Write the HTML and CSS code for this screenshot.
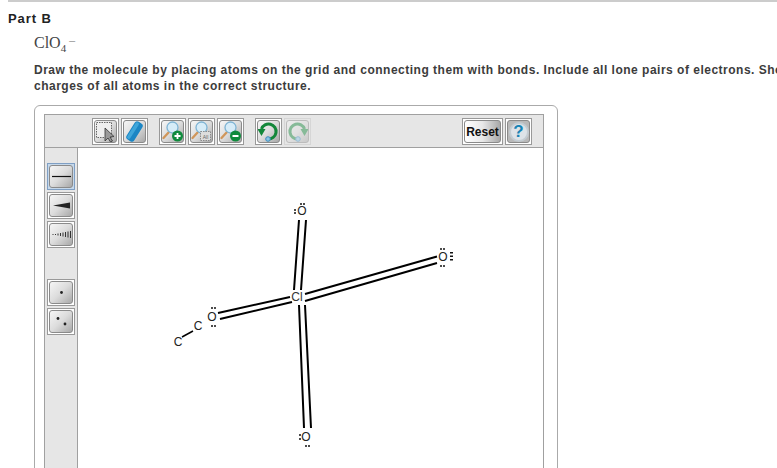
FILE: index.html
```html
<!DOCTYPE html>
<html lang="en">
<head>
  <meta charset="UTF-8">
  <title>Part B</title>
  <link rel="stylesheet" href="styles.css">
</head>
<body>

  <!-- Part heading -->
  <div class="part-head">
    <h2>Part B</h2>
  </div>

  <!-- Question -->
  <section class="question">
    <p class="formula">ClO<sub>4</sub><sup>&minus;</sup></p>
    <p class="prompt">Draw the molecule by placing atoms on the grid and connecting them with bonds. Include all lone pairs of electrons. Show the formal<br>charges of all atoms in the correct structure.</p>
  </section>

  <!-- Drawing widget -->
  <section class="widget">
    <div class="applet">

      <div class="toolbar">
        <div class="group">
          <button class="tool"><span class="face">
            <svg viewBox="0 0 21 21"><rect x="1.500" y="1.500" width="15" height="15" fill="#eee" stroke="#666" stroke-dasharray="1.500 1"/><path d="M10 7l9 8.500-4 .5 2.500 4-2 1-2.500-4-3 3z" fill="#999" stroke="#333" stroke-width=".8"/></svg>
          </span></button>
          <button class="tool"><span class="face">
            <svg viewBox="0 0 21 21"><rect x="6" y="0" width="9" height="21" rx="3" fill="#1c86c4" transform="rotate(32 10.500 10.500)"/><rect x="7" y="1" width="3.500" height="19" rx="1.700" fill="#3fa6da" transform="rotate(32 10.500 10.500)"/></svg>
          </span></button>
        </div>
        <div class="group">
          <button class="tool"><span class="face">
            <svg viewBox="0 0 21 21"><path d="M1.500 17l5.500-6" stroke="#d0965a" stroke-width="2.300" stroke-linecap="round"/><circle cx="10.500" cy="6.500" r="5.500" fill="#d6ecf8" stroke="#7fb4d4" stroke-width="1.300"/><circle cx="15.500" cy="15" r="5.500" fill="#0f8a3c"/><path d="M12.500 15h6M15.500 12v6" stroke="#fff" stroke-width="1.800"/></svg>
          </span></button>
          <button class="tool"><span class="face">
            <svg viewBox="0 0 21 21"><path d="M1.500 17l5.500-6" stroke="#d0965a" stroke-width="2.300" stroke-linecap="round"/><circle cx="10.500" cy="6.500" r="5.500" fill="#d6ecf8" stroke="#7fb4d4" stroke-width="1.300"/><rect x="9.500" y="10.500" width="10" height="9" fill="#ddd" stroke="#777" stroke-width=".8" stroke-dasharray="1.500 1"/><text class="all" x="14.500" y="17.500">All</text></svg>
          </span></button>
          <button class="tool"><span class="face">
            <svg viewBox="0 0 21 21"><path d="M1.500 17l5.500-6" stroke="#d0965a" stroke-width="2.300" stroke-linecap="round"/><circle cx="10.500" cy="6.500" r="5.500" fill="#d6ecf8" stroke="#7fb4d4" stroke-width="1.300"/><circle cx="15.500" cy="15" r="5.500" fill="#0f8a3c"/><path d="M12.500 15h6" stroke="#fff" stroke-width="2"/></svg>
          </span></button>
        </div>
        <div class="group">
          <button class="tool"><span class="face">
            <svg viewBox="0 0 21 21"><path d="M10 18A7.500 7.500 0 1 0 3.500 8" fill="none" stroke="#13873a" stroke-width="3"/><path d="M-.5 8h8l-4 7z" fill="#13873a"/><circle cx="10" cy="18" r="2.300" fill="#8cc4e4" stroke="#3d8dbd"/></svg>
          </span></button>
          <button class="tool off"><span class="face">
            <svg viewBox="0 0 21 21"><path d="M11 18A7.500 7.500 0 1 1 17.500 8" fill="none" stroke="#13873a" stroke-width="3"/><path d="M21.500 8h-8l4 7z" fill="#13873a"/><circle cx="11" cy="18" r="2.300" fill="#8cc4e4" stroke="#3d8dbd"/></svg>
          </span></button>
        </div>
        <div class="group group-right">
          <button class="tool reset"><span class="face">Reset</span></button>
          <button class="tool"><span class="face help"><span class="help-mark">?</span></span></button>
        </div>
      </div>

      <div class="work">
        <div class="sidebar">
          <div class="side-group">
            <button class="tool selected"><span class="face">
              <svg viewBox="0 0 21 21"><path d="M1 10.500h19" stroke="#111" stroke-width="1.200"/></svg>
            </span></button>
            <button class="tool"><span class="face">
              <svg viewBox="0 0 21 21"><path d="M2 10.500l17-3v6z" fill="#222"/></svg>
            </span></button>
            <button class="tool"><span class="face">
              <svg viewBox="0 0 21 21"><path d="M2 10v1M4.500 10v1M7 9.500v2M9.500 9v3M12 8.500v4M14.500 8v5M17 7.500v6M19.500 7v7" stroke="#333" stroke-width="1"/></svg>
            </span></button>
          </div>
          <div class="side-group">
            <button class="tool"><span class="face">
              <svg viewBox="0 0 21 21"><circle cx="10.500" cy="10.500" r="1.400" fill="#222"/></svg>
            </span></button>
            <button class="tool"><span class="face">
              <svg viewBox="0 0 21 21"><circle cx="7" cy="7.500" r="1.400" fill="#222"/><circle cx="14" cy="13" r="1.400" fill="#222"/></svg>
            </span></button>
          </div>
        </div>

        <!-- viewBox uses page coordinates so atoms read off the picture -->
        <div class="canvas">
          <svg class="molecule" viewBox="78 148 465 320">
            <g class="bond">
              <path d="M299 220L294 290M306 220L301 290"/>
              <path d="M299 305L304 428M305 305L311 428"/>
              <path d="M305 294L437 256.500M305 301L437 263"/>
              <path d="M218 313L290 297M220 319L292 302"/>
            </g>
            <path class="single" d="M182 337L193 331"/>

            <g class="atom">
              <text x="302" y="215">O</text>
              <text x="443" y="261">O</text>
              <text x="212" y="321">O</text>
              <text x="306" y="441">O</text>
              <text x="198" y="330">C</text>
              <text x="178" y="346">C</text>
              <text class="cl" x="297" y="301">Cl</text>
            </g>

            <g class="pairs">
              <circle cx="301" cy="204" r="1"/><circle cx="304" cy="204" r="1"/>
              <circle cx="295" cy="210" r="1"/><circle cx="295" cy="213" r="1"/>
              <circle cx="441" cy="249" r="1"/><circle cx="444" cy="249" r="1"/>
              <circle cx="441" cy="266" r="1"/><circle cx="444" cy="266" r="1"/>
              <rect x="450" y="252" width="3" height="1.500"/>
              <rect x="450" y="255.500" width="3" height="1.500"/>
              <rect x="450" y="259" width="3" height="1.500"/>
              <circle cx="212" cy="308" r="1"/><circle cx="215" cy="308" r="1"/>
              <circle cx="212" cy="326" r="1"/><circle cx="215" cy="326" r="1"/>
              <circle cx="300" cy="435" r="1"/><circle cx="300" cy="439" r="1"/>
              <circle cx="306" cy="446" r="1"/><circle cx="309" cy="446" r="1"/>
            </g>
          </svg>
        </div>
      </div>

    </div>
  </section>

</body>
</html>
```

FILE: styles.css
```css
/* General Reset */
* {
  margin: 0;
  padding: 0;
  box-sizing: border-box;
}

html, body {
  height: 468px;
  overflow: hidden;
}

body {
  font-family: "Liberation Sans", Arial, sans-serif;
  background-color: #ffffff;
  color: #333333;
}

/* Part heading */
.part-head {
  margin-left: 8px;
  border-top: 2px solid #cccccc;
  padding-top: 9px;
}

.part-head h2 {
  font-size: 13px;
  line-height: 15px;
  letter-spacing: 0.9px;
  color: #222222;
}

/* Question */
.question {
  padding-left: 34px;
}

.formula {
  font-family: "Liberation Serif", "Times New Roman", serif;
  font-size: 16px;
  line-height: 20px;
  margin-top: 7px;
  color: #444444;
}

.formula sub,
.formula sup {
  font-size: 11px;
  line-height: 0;
}

.formula sup {
  font-size: 13px;
  margin-left: 2px;
  vertical-align: 2px;
  color: #888888;
}

.prompt {
  margin-top: 9px;
  font-size: 12px;
  font-weight: bold;
  line-height: 16px;
  letter-spacing: 0.5px;
  white-space: nowrap;
  color: #3c3c3c;
}

/* Drawing widget */
.widget {
  margin: 11px 0 0 34px;
  width: 524px;
  height: 385px;
  border: 1px solid #aaaaaa;
  border-radius: 6px;
  padding: 8px 13px 0 9px;
}

.applet {
  height: 375px;
  border: 1px solid #a0a0a0;
  display: flex;
  flex-direction: column;
}

.toolbar {
  height: 33px;
  background-color: #e6e6e6;
  border-bottom: 1px solid #a0a0a0;
  display: flex;
  align-items: center;
  padding: 1px 11px 0 47px;
  gap: 11px;
}

.group {
  display: flex;
  gap: 2px;
}

.group-right {
  margin-left: auto;
}

/* Buttons */
.tool {
  display: block;
  width: 27px;
  height: 27px;
  padding: 1px;
  border: 1px solid #999999;
  background-color: #ffffff;
  font-family: inherit;
}

.face {
  display: flex;
  align-items: center;
  justify-content: center;
  width: 100%;
  height: 100%;
  border: 1px solid #8a8a8a;
  border-radius: 3px;
  background: linear-gradient(135deg, #f6f6f6 0%, #dcdcdc 50%, #a8a8a8 100%);
}

.face svg {
  width: 21px;
  height: 21px;
}

.tool.off {
  border-color: #c4c4c4;
  background-color: #e6e6e6;
  opacity: 0.45;
}

.tool.selected {
  border-color: #7f9fc4;
  background-color: #c6d8ea;
}

.reset {
  width: 41px;
}

.reset .face {
  font-size: 12px;
  font-weight: bold;
  color: #111111;
  background: linear-gradient(90deg, #ffffff 0%, #e8e8e8 50%, #a8a8a8 100%);
}

.help {
  background: #b9b9b9;
}

.help-mark {
  display: block;
  width: 20px;
  height: 20px;
  border-radius: 50%;
  background-color: #dde3e8;
  border: 2px solid #c4ccd2;
  font-size: 17px;
  font-weight: bold;
  line-height: 16px;
  text-align: center;
  color: #1883b5;
}

.all {
  font-size: 5px;
  text-anchor: middle;
  fill: #666666;
}

/* Work area */
.work {
  flex: 1;
  display: flex;
  min-height: 0;
}

.sidebar {
  width: 33px;
  background-color: #e6e6e6;
  border-right: 1px solid #a0a0a0;
  padding: 15px 1px 0 2px;
}

.side-group {
  display: flex;
  flex-direction: column;
  gap: 2px;
  margin-bottom: 31px;
}

.sidebar .tool {
  width: 28px;
}

.canvas {
  flex: 1;
  background-color: #ffffff;
}

.molecule {
  display: block;
  width: 465px;
  height: 320px;
}

.bond path {
  fill: none;
  stroke: #000000;
  stroke-width: 2;
}

.single {
  fill: none;
  stroke: #000000;
  stroke-width: 1.5;
}

.atom text {
  font-size: 12px;
  text-anchor: middle;
  fill: #222222;
}

.atom .cl {
  font-size: 12px;
  fill: #333333;
}

.pairs circle,
.pairs rect {
  fill: #111111;
}
```
